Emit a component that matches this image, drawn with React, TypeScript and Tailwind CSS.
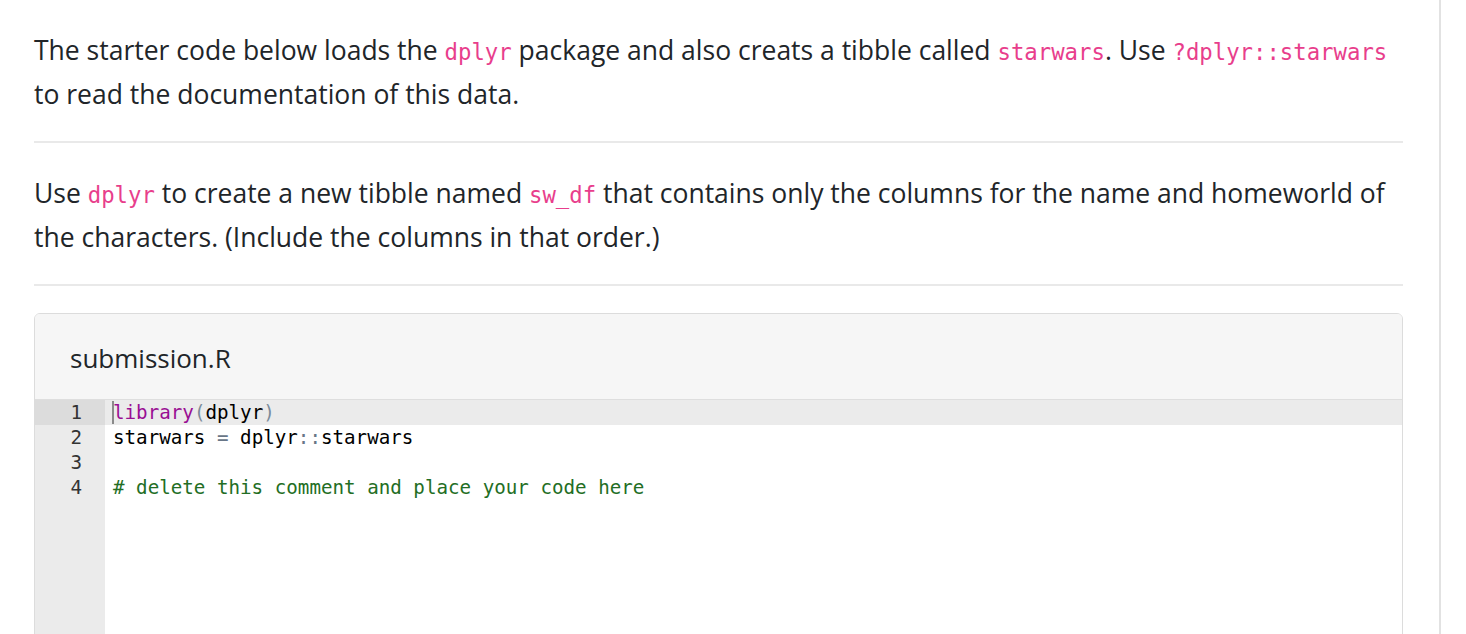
const sans = "font-['Open_Sans','Noto_Sans',sans-serif]";

function Code({ children }: { children: React.ReactNode }) {
  return (
    <code className="font-['DejaVu_Sans_Mono',monospace] text-[22.3px] leading-none text-[#e83e8c]">
      {children}
    </code>
  );
}

const lines: React.ReactNode[] = [
  <>
    <span className="text-[#990f93]">library</span>
    <span className="text-[#7b8b9b]">(</span>dplyr<span className="text-[#7b8b9b]">)</span>
  </>,
  <>
    starwars <span className="text-[#687687]">=</span> dplyr<span className="text-[#687687]">::</span>starwars
  </>,
  <>{"\u00a0"}</>,
  <span className="text-[#236e24]"># delete this comment and place your code here</span>,
];

export default function App() {
  return (
    <div className={`${sans} flex h-[634px] w-[1466px] overflow-hidden bg-white text-[#212529]`}>
      <main className="w-[1439px] shrink-0 pl-[34px] pr-[36px] pt-[28px]">
        <p className="text-[26.5px] leading-[44px] whitespace-nowrap">
          The starter code below loads the <Code>dplyr</Code> package and also creats a tibble called{" "}
          <Code>starwars</Code>. Use <Code>?dplyr::starwars</Code>
          <br />
          to read the documentation of this data.
        </p>
        <hr className="mt-[25px] mb-[28px] h-[2px] border-0 bg-[#e9e9e9]" />
        <p className="text-[26.5px] leading-[44px] whitespace-nowrap">
          Use <Code>dplyr</Code> to create a new tibble named <Code>sw_df</Code> that contains only the columns
          for the name and homeworld of
          <br />
          the characters. (Include the columns in that order.)
        </p>
        <hr className="mt-[25px] mb-[27px] h-[2px] border-0 bg-[#e9e9e9]" />

        <section className="h-[400px] overflow-hidden rounded-[6px] border border-[#dcdcdc]">
          <div className="flex h-[86px] items-center border-b border-[#dedede] bg-[#f6f6f6] px-[35px]">
            <h3 className="pt-[2px] text-[26px] leading-none">submission.R</h3>
          </div>
          <div className="flex h-full font-['DejaVu_Sans_Mono',monospace] text-[19.2px] leading-[25px] text-[#000]">
            <div className="w-[70px] shrink-0 bg-[#ebebeb] text-[#333]">
              {lines.map((_, i) => (
                <div
                  key={i}
                  className={`pr-[23px] text-right ${i === 0 ? "bg-[#dcdcdc]" : ""}`}
                >
                  {i + 1}
                </div>
              ))}
            </div>
            <div className="flex-1">
              {lines.map((line, i) => (
                <div
                  key={i}
                  className={`relative whitespace-pre pl-[8px] ${i === 0 ? "bg-[#ebebeb]" : ""}`}
                >
                  {i === 0 ? (
                    <span className="absolute left-[7px] top-[1px] h-[23px] w-[2px] bg-[#8a8a8a]" />
                  ) : null}
                  {line}
                </div>
              ))}
            </div>
          </div>
        </section>
      </main>
      <div className="w-[2px] shrink-0 bg-[#e2e2e2]" />
    </div>
  );
}
